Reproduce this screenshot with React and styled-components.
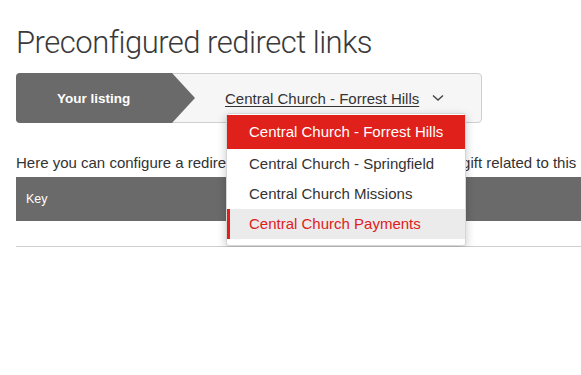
import React from "react";
import styled, { createGlobalStyle } from "styled-components";

const Global = createGlobalStyle`
  html, body { margin: 0; padding: 0; background: #fff; overflow: hidden; }
  body { font-family: "Liberation Sans", Arial, sans-serif; color: #333; }
`;

const Page = styled.div`
  width: 620px;
  padding: 24px 0 0 16px;
`;

const Title = styled.h1`
  margin: 0 0 11px 0;
  font-family: "Roboto", "Liberation Sans", sans-serif;
  font-weight: 300;
  font-size: 31px;
  line-height: 38px;
  color: #3a3a3a;
  letter-spacing: -0.5px;
`;

const Bar = styled.div`
  position: relative;
  width: 464px;
  height: 48px;
  border: 1px solid #cfcfcf;
  border-radius: 4px;
  background: #f6f6f6;
  display: flex;
  align-items: stretch;
`;

const Step = styled.div`
  width: 179px;
  margin: -1px 0 -1px -1px;
  background: #6a6a6a;
  clip-path: polygon(0 0, 156px 0, 179px 50%, 156px 100%, 0 100%);
  border-radius: 4px 0 0 4px;
  color: #fff;
  font-weight: bold;
  font-size: 13.5px;
  display: flex;
  align-items: center;
  padding-left: 41px;
  box-sizing: border-box;
`;

const Trigger = styled.div`
  display: flex;
  align-items: center;
  gap: 9px;
  padding-left: 30px;
  font-size: 15px;
  color: #333;
`;

const TriggerText = styled.span`
  text-decoration: underline;
  text-underline-offset: 2px;
  padding-right: 4px;
`;

const Menu = styled.ul`
  position: absolute;
  left: 209px;
  top: 39px;
  width: 238px;
  margin: 0;
  padding: 1px 0 6px;
  list-style: none;
  background: #fff;
  border: 1px solid #d6d6d6;
  border-radius: 3px;
  box-shadow: 0 3px 10px rgba(0, 0, 0, 0.22);
  z-index: 5;
`;

const Item = styled.li`
  height: ${(p) => (p.$first ? 34 : 30)}px;
  box-sizing: border-box;
  display: flex;
  align-items: center;
  padding-left: ${(p) => (p.$hover ? 19 : 22)}px;
  padding-bottom: 1px;
  font-size: 15px;
  background: ${(p) => (p.$active ? "#e0201a" : p.$hover ? "#ebebeb" : "#fff")};
  color: ${(p) => (p.$active ? "#fff" : p.$hover ? "#e0201a" : "#333")};
  border-left: ${(p) => (p.$hover ? "3px solid #e0201a" : "none")};
`;

const Intro = styled.p`
  margin: 31px 0 0 0;
  font-size: 15px;
  line-height: 18px;
  white-space: nowrap;
  color: #333;
`;

const TableHead = styled.div`
  margin-top: 5px;
  height: 44px;
  background: #6a6a6a;
  color: #fff;
  font-size: 12.5px;
  display: flex;
  align-items: center;
  padding-left: 10px;
`;

const Rule = styled.div`
  margin-top: 25px;
  height: 1px;
  background: #cfcfcf;
`;

const Chevron = () => (
  <svg width="12" height="8" viewBox="0 0 12 8">
    <polyline points="1,1.5 6,6 11,1.5" fill="none" stroke="#444" strokeWidth="1.4" />
  </svg>
);

export default function App() {
  const items = [
    "Central Church - Forrest Hills",
    "Central Church - Springfield",
    "Central Church Missions",
    "Central Church Payments",
  ];
  return (
    <>
      <Global />
      <Page>
        <Title>Preconfigured redirect links</Title>
        <Bar>
          <Step>Your listing</Step>
          <Trigger>
            <TriggerText>Central Church - Forrest Hills</TriggerText>
            <Chevron />
          </Trigger>
          <Menu>
            {items.map((t, i) => (
              <Item key={t} $first={i === 0} $active={i === 0} $hover={i === 3}>
                {t}
              </Item>
            ))}
          </Menu>
        </Bar>
        <Intro>
          Here you can configure a redirect link for each specific type of new gift related to this listing.
        </Intro>
        <TableHead>Key</TableHead>
        <Rule />
      </Page>
    </>
  );
}
